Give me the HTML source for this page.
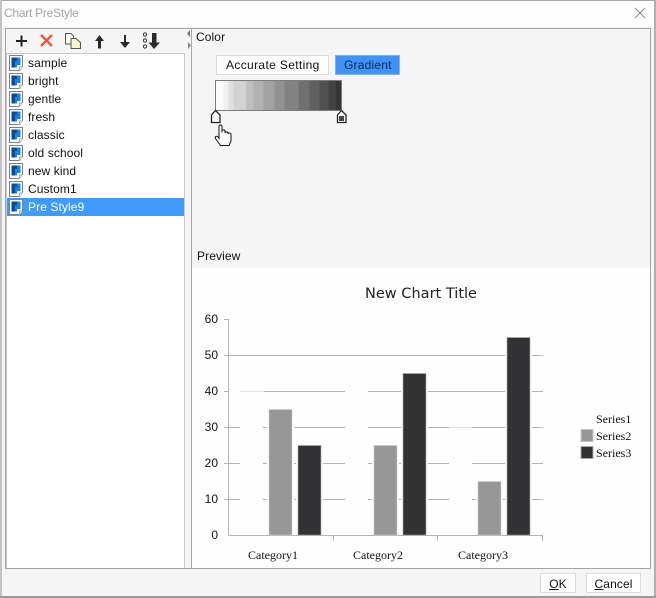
<!DOCTYPE html>
<html><head><meta charset="utf-8">
<style>
html,body{margin:0;padding:0;background:#fff}
#p{position:relative;width:656px;height:598px;overflow:hidden;background:#fefefe;font-family:"Liberation Sans",sans-serif;font-size:12px;color:#111}
#p div{position:absolute;box-sizing:border-box}
.t{white-space:nowrap;line-height:18px;letter-spacing:.1px}
.row{left:7px;width:177px;height:18px}
.row .t{left:21px;top:0}
.row svg{position:absolute;left:2px;top:1px}
svg{position:absolute;left:0;top:0}
u{text-decoration:underline}
</style></head><body>
<div id="p">
<div style="left:0;top:0;width:656px;height:1px;background:#a8a8a8"></div>
<div style="left:0;top:0;width:2px;height:598px;background:#c4c4c4"></div>
<div style="left:654px;top:0;width:2px;height:598px;background:#b0b0b0"></div>
<div style="left:2px;top:27px;width:652px;height:569px;background:#f5f5f5"></div>
<div style="left:0;top:596px;width:656px;height:2px;background:#9a9a9a"></div>
<div class="t" style="left:4px;top:4px;color:#a4a4a4;letter-spacing:-.25px">Chart PreStyle</div>
<svg width="656" height="30" style="left:0;top:0"><path d="M635 8L645 18M645 8L635 18" stroke="#8a8a8a" stroke-width="1" fill="none"/></svg>

<div style="left:5px;top:28px;width:646px;height:541px;border:1px solid #a4a4a4;background:#f5f5f5"></div>
<div style="left:6px;top:53px;width:179px;height:515px;background:#fff;border:1px solid #c8c8c8;border-bottom:0"></div>
<div style="left:191px;top:29px;width:1px;height:539px;background:#a8a8a8"></div>
<div style="left:192px;top:268px;width:458px;height:300px;background:#fefefe"></div>

<svg width="200" height="60">
<path d="M16 41H27M21.500 35.500V46.500" stroke="#222" stroke-width="2" fill="none"/>
<path d="M41 35L52 46M52 35L41 46" stroke="#e8583a" stroke-width="2.400" fill="none"/>
<path d="M65.500 33.500H71L73.500 36V44H65.500Z" fill="#fff" stroke="#555"/>
<path d="M71 38.500H76L80.500 42.500V48.500H71Z" fill="#fdf3c8" stroke="#555"/>
<path d="M99.500 35L104 41H101V48.500H98V41H95Z" fill="#2a2a2a"/>
<path d="M125 48L120 42H124V35H126V42H130Z" fill="#2a2a2a"/>
<circle cx="145" cy="34.500" r="1.600" fill="#fff" stroke="#333"/>
<circle cx="145" cy="40.500" r="1.600" fill="#fff" stroke="#333"/>
<circle cx="145" cy="46.500" r="1.600" fill="#fff" stroke="#333"/>
<path d="M154 49L148.500 42.500H152V33H156.500V42.500H160Z" fill="#2a2a2a"/>
<path d="M190 30V37L187 33.500Z" fill="#777"/>
<path d="M188 42V49L191 45.500Z" fill="#888"/>
</svg>

<div class="row" style="top:54px"><svg width="16" height="16"><use href="#ic"/></svg><div class="t">sample</div></div>
<div class="row" style="top:72px"><svg width="16" height="16"><use href="#ic"/></svg><div class="t">bright</div></div>
<div class="row" style="top:90px"><svg width="16" height="16"><use href="#ic"/></svg><div class="t">gentle</div></div>
<div class="row" style="top:108px"><svg width="16" height="16"><use href="#ic"/></svg><div class="t">fresh</div></div>
<div class="row" style="top:126px"><svg width="16" height="16"><use href="#ic"/></svg><div class="t">classic</div></div>
<div class="row" style="top:144px"><svg width="16" height="16"><use href="#ic"/></svg><div class="t">old school</div></div>
<div class="row" style="top:162px"><svg width="16" height="16"><use href="#ic"/></svg><div class="t">new kind</div></div>
<div class="row" style="top:180px"><svg width="16" height="16"><use href="#ic"/></svg><div class="t">Custom1</div></div>
<div class="row" style="top:198px;background:#3f9bfb"><svg width="16" height="16"><use href="#ic"/></svg><div class="t" style="color:#fff">Pre Style9</div></div>
<svg width="0" height="0"><defs><g id="ic">
<path d="M.5 .5H13.500V11.500L10.500 15.500H.5Z" fill="#fff" stroke="#808080"/>
<path d="M2.500 2.500H11.500V10H8V12.500H2.500Z" fill="#1283ea"/>
<path d="M2.500 2.500H8V6H6V12.500H2.500Z" fill="#0a4b94"/>
<path d="M10.500 15.500V12H13.500" fill="#ececec" stroke="#aaa"/>
</g></defs></svg>

<div class="t" style="left:196px;top:28px">Color</div>
<div class="t" style="left:197px;top:247px">Preview</div>

<div style="left:216px;top:55px;width:113px;height:20px;background:#fff;border:1px solid #dcdcdc"></div>
<div class="t" style="left:226px;top:56px;letter-spacing:.35px">Accurate Setting</div>
<div style="left:335px;top:55px;width:65px;height:20px;background:#3f93f8;border:1px solid #7ab4f5"></div>
<div class="t" style="left:344px;top:56px;letter-spacing:.2px;color:#102a4a">Gradient</div>

<div style="left:215px;top:80px;width:127px;height:31px;border:1px solid #7c7c7c;background:linear-gradient(90deg,#fbfbfb 0 6%,#f0f0f0 6% 10%,#e0e0e0 10% 14%,#d2d2d2 14% 24%,#c0c0c0 24% 30%,#b2b2b2 30% 38%,#a2a2a2 38% 47%,#929292 47% 55%,#828282 55% 66%,#707070 66% 75%,#606060 75% 83%,#505050 83% 90%,#424242 90% 96%,#363636 96% 100%)"></div>

<svg width="656" height="598">
<path d="M215.500 110.500L220 115V122.500H211.500V115Z" fill="#fff" stroke="#222" stroke-width="1.300"/>
<path d="M341.500 110.500L346 115V122.500H337.500V115Z" fill="#fff" stroke="#222" stroke-width="1.300"/>
<rect x="339" y="116" width="5" height="5" fill="#444"/>
<path d="M219 126.500C219 124.500 222 124.500 222 126.500V132.500V131C222 129.500 225 129.500 225 131V133C225 131.500 228 131.500 228 133V134C228 132.500 231 132.500 231 134.500V141L229 145.500H220.500L215.500 138.500C214.500 136.500 216.500 135.500 218 137L219 138.500Z" fill="#fff" stroke="#111" stroke-width="1"/>

<g fill="#b4b4b4">
<rect x="224" y="319" width="5" height="1"/>
<rect x="224" y="355" width="319" height="1"/>
<rect x="224" y="391" width="5" height="1"/><rect x="264" y="391" width="81" height="1"/><rect x="368" y="391" width="175" height="1"/><rect x="240" y="391" width="24" height="1" fill="#e2e2e2"/>
<rect x="224" y="427" width="16" height="1"/><rect x="263" y="427" width="82" height="1"/><rect x="368" y="427" width="81" height="1"/><rect x="472" y="427" width="71" height="1"/><rect x="449" y="427" width="23" height="1" fill="#e2e2e2"/>
<rect x="224" y="463" width="16" height="1"/><rect x="263" y="463" width="82" height="1"/><rect x="368" y="463" width="81" height="1"/><rect x="472" y="463" width="71" height="1"/>
<rect x="224" y="499" width="16" height="1"/><rect x="263" y="499" width="82" height="1"/><rect x="368" y="499" width="81" height="1"/><rect x="472" y="499" width="71" height="1"/>
<rect x="228" y="319" width="1" height="217"/>
<rect x="228" y="535" width="315" height="1"/>
<rect x="333" y="535" width="1" height="6"/><rect x="437" y="535" width="1" height="6"/><rect x="542" y="535" width="1" height="6"/>
</g>
<g fill="#fefefe">
<rect x="267" y="408" width="27" height="127"/><rect x="296" y="444" width="27" height="91"/>
<rect x="372" y="444" width="27" height="91"/><rect x="401" y="372" width="27" height="163"/>
<rect x="476" y="480" width="27" height="55"/><rect x="505" y="336" width="27" height="199"/>
</g>
<g fill="#979798" stroke="#cfcfcf" stroke-width=".6">
<rect x="269" y="409.500" width="23" height="125.500"/>
<rect x="374" y="445.500" width="23" height="89.500"/>
<rect x="478" y="481.500" width="23" height="53.500"/>
</g>
<g fill="#323234" stroke="#a8a8a8" stroke-width=".6">
<rect x="298" y="445.500" width="23" height="89.500"/>
<rect x="403" y="373.500" width="23" height="161.500"/>
<rect x="507" y="337.500" width="23" height="197.500"/>
</g>
<rect x="581" y="429.500" width="12" height="12" fill="#979798" stroke="#c4c4c4"/>
<rect x="581" y="446.500" width="12" height="12" fill="#323234" stroke="#a8a8a8"/>

<g font-family="Liberation Sans, sans-serif" font-size="12" fill="#111" text-anchor="end">
<text x="218" y="323">60</text><text x="218" y="359">50</text><text x="218" y="395">40</text>
<text x="218" y="431">30</text><text x="218" y="467">20</text><text x="218" y="503">10</text><text x="218" y="539">0</text>
</g>
<text x="365" y="298" font-family="DejaVu Sans, sans-serif" font-size="14" textLength="112" lengthAdjust="spacingAndGlyphs" fill="#222">New Chart Title</text>
<g font-family="Liberation Serif, serif" font-size="12" fill="#111">
<text x="248" y="559">Category1</text><text x="353" y="559">Category2</text><text x="458" y="559">Category3</text>
<text x="596" y="423">Series1</text><text x="596" y="440">Series2</text><text x="596" y="457">Series3</text>
</g>
</svg>

<div style="left:540px;top:573px;width:36px;height:20px;background:#fff;border:1px solid #dcdcdc"></div>
<div class="t" style="left:540px;top:575px;width:36px;text-align:center"><u>O</u>K</div>
<div style="left:586px;top:573px;width:55px;height:20px;background:#fff;border:1px solid #dcdcdc"></div>
<div class="t" style="left:586px;top:575px;width:55px;text-align:center"><u>C</u>ancel</div>
</div>
</body></html>
